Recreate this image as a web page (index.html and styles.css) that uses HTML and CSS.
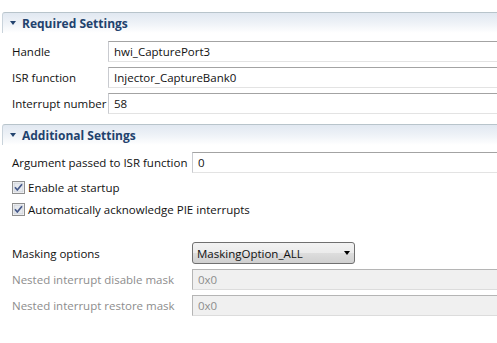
FILE: index.html
```html
<!DOCTYPE html>
<html>
<head>
<meta charset="utf-8">
<link rel="stylesheet" href="styles.css">
</head>
<body>
<div class="page">
  <section class="section first">
    <div class="section-header">
      <span class="twisty"></span>
      <span class="title">Required Settings</span>
    </div>
    <div class="form req">
      <label class="lbl">Handle</label>
      <div class="field">hwi_CapturePort3</div>
      <label class="lbl">ISR function</label>
      <div class="field">Injector_CaptureBank0</div>
      <label class="lbl">Interrupt number</label>
      <div class="field">58</div>
    </div>
  </section>

  <section class="section second">
    <div class="section-header">
      <span class="twisty"></span>
      <span class="title">Additional Settings</span>
    </div>
    <div class="form add">
      <label class="lbl">Argument passed to ISR function</label>
      <div class="field">0</div>
    </div>
    <div class="checks">
      <div class="check-row">
        <svg class="cb" width="13" height="13" viewBox="0 0 13 13">
          <rect x="0.5" y="0.5" width="12" height="12" fill="#fff" stroke="#8f8f8f"/>
          <rect x="2" y="2" width="9" height="9" fill="#e6e9ee" stroke="#c7cbd2" stroke-width="0.8"/>
          <path d="M3 6.3 L5.3 9 L10 3.2" fill="none" stroke="#46598a" stroke-width="1.7" stroke-linejoin="round"/>
        </svg>
        <span>Enable at startup</span>
      </div>
      <div class="check-row">
        <svg class="cb" width="13" height="13" viewBox="0 0 13 13">
          <rect x="0.5" y="0.5" width="12" height="12" fill="#fff" stroke="#8f8f8f"/>
          <rect x="2" y="2" width="9" height="9" fill="#e6e9ee" stroke="#c7cbd2" stroke-width="0.8"/>
          <path d="M3 6.3 L5.3 9 L10 3.2" fill="none" stroke="#46598a" stroke-width="1.7" stroke-linejoin="round"/>
        </svg>
        <span>Automatically acknowledge PIE interrupts</span>
      </div>
    </div>
    <div class="form mask">
      <label class="lbl">Masking options</label>
      <div class="select-wrap">
        <div class="select">
          <span>MaskingOption_ALL</span>
          <span class="arrow"></span>
        </div>
      </div>
      <label class="lbl disabled">Nested interrupt disable mask</label>
      <div class="field off">0x0</div>
      <label class="lbl disabled">Nested interrupt restore mask</label>
      <div class="field off">0x0</div>
    </div>
  </section>
</div>
</body>
</html>
```
FILE: styles.css
```css
html, body {
  margin: 0;
  padding: 0;
  background: #fff;
}
body {
  font-family: "Open Sans", "Noto Sans", "Liberation Sans", sans-serif;
  font-size: 11.5px;
  color: #111;
  width: 497px;
  height: 343px;
  overflow: hidden;
}
.page {
  padding-top: 12px;
}
.section-header {
  margin-left: 2px;
  height: 21px;
  box-sizing: border-box;
  border-top: 1px solid #b8c4cb;
  border-left: 1px solid #c9d3db;
  border-top-left-radius: 3px;
  background: linear-gradient(#e1e8f1 0%, #eef2f7 50%, #ffffff 100%);
  display: flex;
  align-items: center;
}
.twisty {
  width: 0;
  height: 0;
  margin-left: 7px;
  margin-right: 6px;
  border-left: 3.5px solid transparent;
  border-right: 3.5px solid transparent;
  border-top: 4px solid #24446f;
}
.title {
  font-weight: bold;
  color: #22426d;
  font-size: 12px;
}
.form {
  display: grid;
  row-gap: 5px;
  align-items: center;
}
.req {
  grid-template-columns: 96px 1fr;
  margin: 8px 0 0 12px;
  grid-auto-rows: 21px;
}
.section.second {
  margin-top: 10px;
}
.add {
  grid-template-columns: 180px 1fr;
  margin: 7px 0 0 12px;
  grid-auto-rows: 21px;
}
.mask {
  grid-template-columns: 180px 1fr;
  margin: 22px 0 0 12px;
  grid-template-rows: 22px 21px 21px;
}
.lbl {
  white-space: nowrap;
}
.lbl.disabled {
  color: #8d8d8d;
}
.field {
  height: 21px;
  box-sizing: border-box;
  border: 1px solid #abadb3;
  border-top-color: #a3a3a3;
  border-bottom-color: #e3e3e3;
  border-left-color: #c9cbd0;
  border-right: none;
  padding: 0 0 0 5px;
  line-height: 19px;
  white-space: nowrap;
  background: #fff;
}
.field.off {
  background: #f0f0f0;
  color: #8d8d8d;
  border-color: #b5b5b5;
  border-bottom-color: #dcdcdc;
}
.checks {
  margin: 3px 0 0 12px;
}
.check-row {
  height: 22px;
  display: flex;
  align-items: center;
  gap: 3px;
}
.cb {
  flex: none;
}
.select-wrap {
  display: flex;
}
.select {
  width: 163px;
  height: 22px;
  box-sizing: border-box;
  border: 1px solid #707070;
  border-radius: 3px;
  background: linear-gradient(#f3f3f3 0%, #ebebeb 50%, #dddddd 51%, #d0d0d0 100%);
  display: flex;
  align-items: center;
  justify-content: space-between;
  padding: 0 4px 0 4px;
  white-space: nowrap;
}
.arrow {
  width: 0;
  height: 0;
  border-left: 3.5px solid transparent;
  border-right: 3.5px solid transparent;
  border-top: 4px solid #000;
}
```
